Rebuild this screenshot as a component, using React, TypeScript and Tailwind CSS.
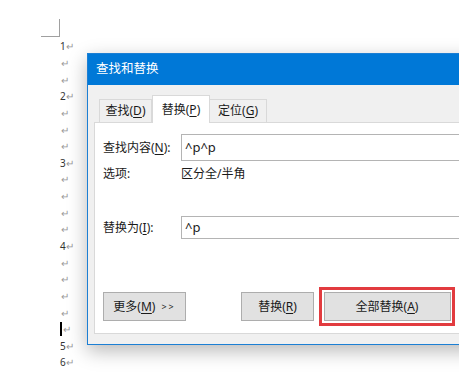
const font = "font-['Noto_Sans','Noto_Sans_CJK_SC',sans-serif]";

// the document gutter: paragraph marks with occasional page-line numbers
const lines: { num?: string; cursor?: boolean }[] = [
  { num: "1" }, {}, {}, { num: "2" }, {}, {}, {}, { num: "3" }, {}, {}, {}, {},
  { num: "4" }, {}, {}, {}, {}, { cursor: true }, { num: "5" }, { num: "6" },
];

function Key({ k }: { k: string }) {
  return <span className="underline underline-offset-2">{k}</span>;
}

function Btn({ children, className }: { children: React.ReactNode; className: string }) {
  return (
    <button className={`h-[29px] bg-[#e1e1e1] border border-[#adadad] text-[12px] text-[#1a1a1a] flex items-center justify-center ${className}`}>
      {children}
    </button>
  );
}

export default function App() {
  return (
    <div className={`relative w-[459px] h-[383px] overflow-hidden bg-white ${font}`}>
      {/* page */}
      <div className="pl-[41px] pt-[19px]">
        <div className="w-[19px] h-[18px] border-r border-b border-[#a0a0a0]" />
        <div className="pl-[19px] pt-[1px]">
          {lines.map((l, i) => (
            <div key={i} className="h-[16.65px] flex items-center text-[10px] leading-none">
              {l.cursor && <span className="inline-block w-[2px] h-[14px] bg-black mr-[1px]" />}
              {l.num && <span className="text-[#333]">{l.num}</span>}
              <span className={`text-[#9a9a9a] ${l.num || l.cursor ? "" : "ml-[1px]"}`}>↵</span>
            </div>
          ))}
        </div>
      </div>

      {/* dialog */}
      <div className="absolute left-[87px] top-[53px] w-[420px] h-[292px] border border-[#1c7fd4] bg-[#f0f0f0] shadow-[0_6px_18px_rgba(0,0,0,0.28)] flex flex-col">
        <div className="h-[31px] bg-[#0078d7] text-white text-[12.5px] flex items-center pl-[8px]">
          查找和替换
        </div>

        <div className="flex-1 pl-[6px] pt-[10px] pb-[10px] flex flex-col">
          {/* tabs */}
          <div className="flex items-end pl-[5px] h-[27px] text-[12px] text-[#1a1a1a]">
            <div className="w-[53px] h-[23px] border border-b-0 border-[#d9d9d9] flex items-center justify-center">
              查找(<Key k="D" />)
            </div>
            <div className="w-[58px] h-[28px] -mb-[1px] bg-white border border-b-0 border-[#d9d9d9] flex items-center justify-center relative z-10">
              替换(<Key k="P" />)
            </div>
            <div className="w-[57px] h-[23px] border border-b-0 border-l-0 border-[#d9d9d9] flex items-center justify-center">
              定位(<Key k="G" />)
            </div>
          </div>

          {/* panel */}
          <div className="flex-1 bg-white border border-[#d9d9d9] pl-[8px] pt-[11px] text-[12px] text-[#1a1a1a] flex flex-col">
            <div className="flex items-center h-[27px]">
              <div className="w-[78px]">查找内容(<Key k="N" />):</div>
              <div className="flex-1 h-[27px] border border-[#b4b4b4] flex items-center pl-[3px] text-[13px]">^p^p</div>
            </div>
            <div className="flex items-center h-[26px]">
              <div className="w-[78px]">选项:</div>
              <div>区分全/半角</div>
            </div>
            <div className="flex items-center h-[23px] mt-[29px]">
              <div className="w-[78px]">替换为(<Key k="I" />):</div>
              <div className="flex-1 h-[23px] border border-[#b4b4b4] flex items-center pl-[3px] text-[13px]">^p</div>
            </div>

            <div className="mt-auto mb-[7px] flex items-center h-[39px]">
              <Btn className="w-[83px]">
                更多(<Key k="M" />)<span className="ml-[6px] text-[9px] tracking-[2px]">&gt;&gt;</span>
              </Btn>
              <Btn className="w-[73px] ml-[55px]">替换(<Key k="R" />)</Btn>
              <div className="ml-[5px] w-[136px] h-[39px] border-[3px] border-[#e23b3f] flex items-center justify-center">
                <Btn className="w-[127px]">全部替换(<Key k="A" />)</Btn>
              </div>
            </div>
          </div>
        </div>
      </div>
    </div>
  );
}
